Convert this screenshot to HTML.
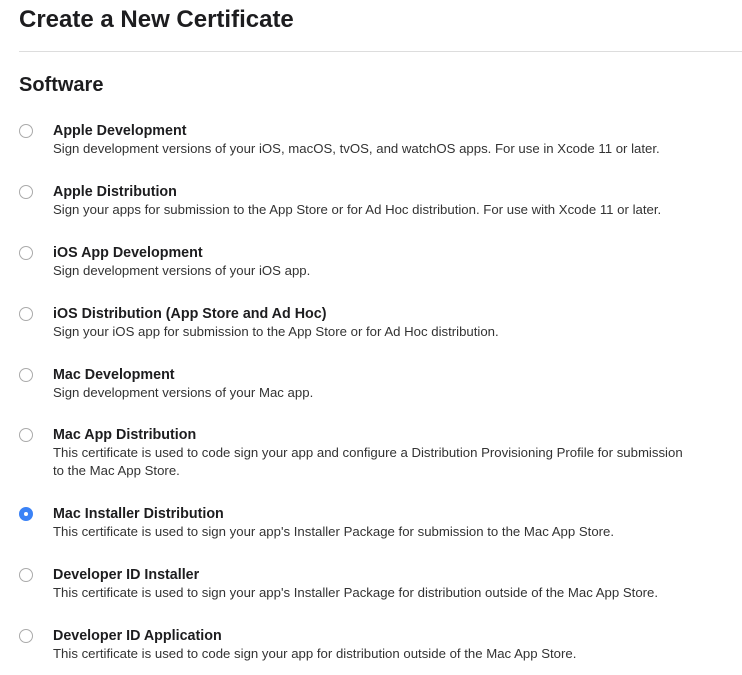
<!DOCTYPE html>
<html><head><style>
body{margin:0;background:#fff;font-family:"Liberation Sans",sans-serif;color:#111;width:742px;height:675px;overflow:hidden;position:relative}
h1{position:absolute;left:19px;top:4px;margin:0;font-size:24px;font-weight:bold;line-height:32px;color:#1d1d1f}
.hr{position:absolute;left:19px;right:0;top:51px;height:1px;background:#ddd}
h2{position:absolute;left:19px;top:72px;margin:0;font-size:20px;font-weight:bold;line-height:26px;color:#1d1d1f}
.it{position:absolute;left:0;width:742px}
.r{position:absolute;left:19px;top:2px;width:12px;height:12px;border:1px solid #aaa;border-radius:50%;background:#fff}
.r.on{background:#3b82f6;border-color:#3b82f6}
.r.on::after{content:"";position:absolute;left:4px;top:4px;width:4px;height:4px;border-radius:50%;background:#fff}
.t{position:absolute;left:53px;top:0;font-size:14.3px;font-weight:bold;line-height:18px;color:#1d1d1f}
.d{position:absolute;left:53px;top:18px;width:680px;font-size:13.2px;line-height:18px;color:#333}
</style></head><body>
<h1>Create a New Certificate</h1>
<div class="hr"></div>
<h2>Software</h2>
<div class="it" style="top:122px"><div class="r"></div><div class="t">Apple Development</div><div class="d">Sign development versions of your iOS, macOS, tvOS, and watchOS apps. For use in Xcode 11 or later.</div></div>
<div class="it" style="top:183px"><div class="r"></div><div class="t">Apple Distribution</div><div class="d">Sign your apps for submission to the App Store or for Ad Hoc distribution. For use with Xcode 11 or later.</div></div>
<div class="it" style="top:244px"><div class="r"></div><div class="t">iOS App Development</div><div class="d">Sign development versions of your iOS app.</div></div>
<div class="it" style="top:305px"><div class="r"></div><div class="t">iOS Distribution (App Store and Ad Hoc)</div><div class="d">Sign your iOS app for submission to the App Store or for Ad Hoc distribution.</div></div>
<div class="it" style="top:366px"><div class="r"></div><div class="t">Mac Development</div><div class="d">Sign development versions of your Mac app.</div></div>
<div class="it" style="top:426px"><div class="r"></div><div class="t">Mac App Distribution</div><div class="d">This certificate is used to code sign your app and configure a Distribution Provisioning Profile for submission<br>to the Mac App Store.</div></div>
<div class="it" style="top:505px"><div class="r on"></div><div class="t">Mac Installer Distribution</div><div class="d">This certificate is used to sign your app's Installer Package for submission to the Mac App Store.</div></div>
<div class="it" style="top:566px"><div class="r"></div><div class="t">Developer ID Installer</div><div class="d">This certificate is used to sign your app's Installer Package for distribution outside of the Mac App Store.</div></div>
<div class="it" style="top:627px"><div class="r"></div><div class="t">Developer ID Application</div><div class="d">This certificate is used to code sign your app for distribution outside of the Mac App Store.</div></div>
</body></html>
